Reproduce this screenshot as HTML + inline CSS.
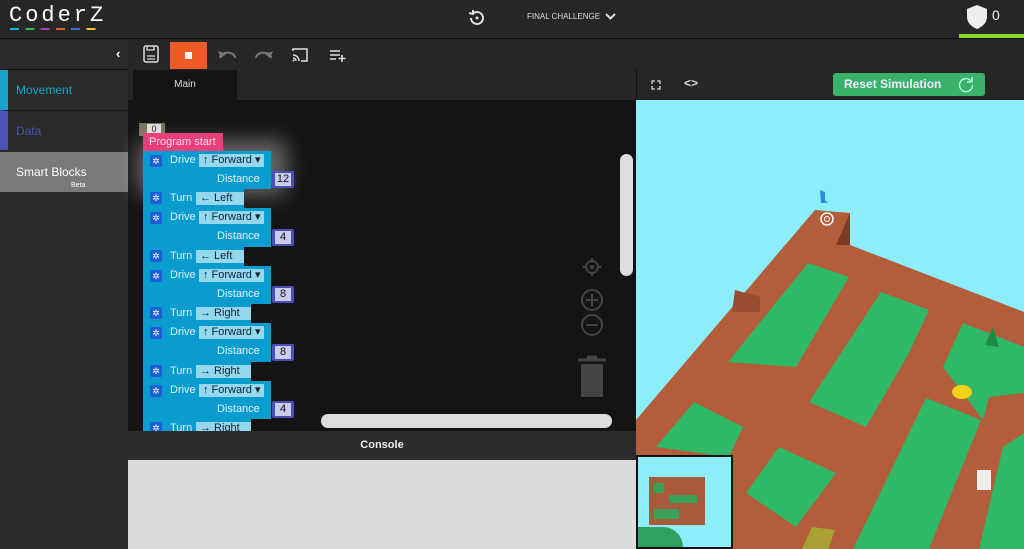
<!DOCTYPE html>
<html><head><meta charset="utf-8"><style>
*{margin:0;padding:0;box-sizing:border-box}
body{width:1024px;height:549px;overflow:hidden;background:#262626;font-family:"Liberation Sans",sans-serif;position:relative}
.abs{position:absolute}
.blk{position:absolute;left:143px;background:#0b9ccf;color:#dff4ff;font-size:11px}
.gear{position:absolute;left:7px;width:12px;height:12px;background:#1c5fd9;border-radius:2px;color:#fff;font-size:9px;line-height:12px;text-align:center}
.dd{position:absolute;background:#93d8ef;color:#123;padding:0 4px;font-size:11px;line-height:13px;height:13px}
.num{position:absolute;left:129px;width:22px;height:17px;background:#4b4fb8;border-radius:2px}
.num span{position:absolute;left:3px;top:2px;width:16px;height:13px;background:#c9ccf0;color:#111;font-size:11px;line-height:13px;text-align:center}
</style></head><body>
<!-- top bar -->
<div class="abs" style="left:0;top:0;width:1024px;height:39px;background:#262626;border-bottom:1px solid #111"></div>
<div class="abs" style="left:9px;top:3px;color:#fff;font-size:22px;letter-spacing:3px;font-family:'Liberation Mono',monospace">CoderZ</div>
<div class="abs" style="left:10px;top:28px;width:90px;height:2px;background:linear-gradient(90deg,#17b3d8 0 10%,transparent 10% 17%,#3fb54a 17% 27%,transparent 27% 34%,#9b46b0 34% 44%,transparent 44% 51%,#e85d2a 51% 61%,transparent 61% 68%,#3e6fd1 68% 78%,transparent 78% 85%,#f2c31b 85% 95%,transparent 95%)"></div>
<svg class="abs" style="left:467px;top:8px" width="20" height="20" viewBox="0 0 20 20"><path d="M4 10a6 6 0 1 0 2-4.5" fill="none" stroke="#ddd" stroke-width="2"/><path d="M2 5l4 1 0-4" fill="none" stroke="#ddd" stroke-width="2"/><circle cx="10" cy="10" r="1.5" fill="#ddd"/></svg>
<div class="abs" style="left:527px;top:12px;color:#ddd;font-size:8px">FINAL CHALLENGE</div>
<svg class="abs" style="left:605px;top:12px" width="11" height="9"><path d="M1 2l4.5 4.5L10 2" fill="none" stroke="#ddd" stroke-width="2"/></svg>
<svg class="abs" style="left:965px;top:4px" width="24" height="26"><path d="M12 1L2 5v8c0 6 5 10 10 12 5-2 10-6 10-12V5z" fill="#eee"/></svg>
<div class="abs" style="left:992px;top:7px;color:#eee;font-size:14px">0</div>
<div class="abs" style="left:959px;top:34px;width:65px;height:4px;background:#8ad82a"></div>
<!-- sidebar -->
<div class="abs" style="left:0;top:40px;width:128px;height:509px;background:#2a2a2a"></div>
<div class="abs" style="left:116px;top:46px;color:#fff;font-size:13px;font-weight:bold">&lsaquo;</div>
<div class="abs" style="left:0;top:69px;width:128px;height:1px;background:#111"></div>
<div class="abs" style="left:0;top:70px;width:128px;height:40px;background:#2a2a2a;border-left:8px solid #1aa3c9"></div>
<div class="abs" style="left:16px;top:83px;color:#1aa3c9;font-size:12px">Movement</div>
<div class="abs" style="left:0;top:110px;width:128px;height:40px;background:#2a2a2a;border-left:8px solid #4a54b8;border-top:1px solid #1a1a1a"></div>
<div class="abs" style="left:16px;top:124px;color:#4a54b8;font-size:12px">Data</div>
<div class="abs" style="left:0;top:152px;width:128px;height:40px;background:#7a7a7a"></div>
<div class="abs" style="left:16px;top:165px;color:#fff;font-size:12px">Smart Blocks</div>
<div class="abs" style="left:71px;top:182px;color:#fff;font-size:7px">Beta</div>
<!-- toolbar -->
<div class="abs" style="left:128px;top:40px;width:508px;height:60px;background:#262626"></div>
<svg class="abs" style="left:143px;top:45px" width="16" height="18"><rect x="1" y="1" width="14" height="16" rx="2" fill="none" stroke="#ddd" stroke-width="1.5"/><path d="M4 1v4h7V1M4 11h8M4 14h8" stroke="#ddd" stroke-width="1.3" fill="none"/></svg>
<div class="abs" style="left:170px;top:42px;width:37px;height:27px;background:#f05a24"></div>
<div class="abs" style="left:185px;top:52px;width:7px;height:7px;background:#fff"></div>
<svg class="abs" style="left:217px;top:48px" width="20" height="12"><path d="M3 10a7 5 0 0 1 15 0" fill="none" stroke="#777" stroke-width="2"/><path d="M1 3l3 7 5-4z" fill="#777"/></svg>
<svg class="abs" style="left:254px;top:48px" width="20" height="12"><path d="M2 10a7 5 0 0 1 15 0" fill="none" stroke="#777" stroke-width="2"/><path d="M19 3l-3 7-5-4z" fill="#777"/></svg>
<svg class="abs" style="left:291px;top:47px" width="18" height="16"><path d="M2 4V2h14v12h-6M2 8a6 6 0 0 1 6 6M2 11a3 3 0 0 1 3 3" fill="none" stroke="#ddd" stroke-width="1.5"/><circle cx="2.5" cy="13.5" r="1" fill="#ddd"/></svg>
<svg class="abs" style="left:329px;top:49px" width="17" height="13"><path d="M1 2h10M1 6h10M1 10h6M13 6v7M9.5 9.5h7" stroke="#ddd" stroke-width="1.6"/></svg>
<!-- workspace -->
<div class="abs" style="left:128px;top:100px;width:508px;height:331px;background:#141414"></div>
<div class="abs" style="left:133px;top:70px;width:104px;height:30px;background:#141414;color:#ddd;font-size:10px;text-align:center;line-height:30px">Main</div>
<div class="abs" style="left:139px;top:123px;width:26px;height:13px;background:#77735a"></div>
<div class="abs" style="left:147px;top:124px;width:14px;height:11px;background:#ddd;color:#222;font-size:9px;text-align:center;line-height:11px">0</div>
<div class="abs" style="left:137px;top:140px;width:150px;height:55px;background:#fff;opacity:.35;filter:blur(10px);border-radius:10px"></div>
<div class="abs" style="left:143px;top:133px;width:80px;height:18px;background:#e8407a;color:#fde;font-size:11px;line-height:18px;padding-left:6px">Program start</div>
<!-- blocks -->
<div class="blk" style="top:151px;width:128px;height:38px"><div class="gear" style="top:4px">✲</div><span class="abs" style="left:27px;top:3px">Drive</span><div class="dd" style="left:56px;top:3px">↑ Forward ▾</div><span class="abs" style="left:74px;top:22px">Distance</span></div>
<div class="num" style="top:171px;left:272px"><span>12</span></div>
<div class="blk" style="top:189px;width:101px;height:19px"><div class="gear" style="top:3px">✲</div><span class="abs" style="left:27px;top:3px">Turn</span><div class="dd" style="left:53px;top:3px">← Left ▾</div></div>
<div class="blk" style="top:208px;width:128px;height:39px"><div class="gear" style="top:4px">✲</div><span class="abs" style="left:27px;top:3px">Drive</span><div class="dd" style="left:56px;top:3px">↑ Forward ▾</div><span class="abs" style="left:74px;top:22px">Distance</span></div>
<div class="num" style="top:229px;left:272px"><span>4</span></div>
<div class="blk" style="top:247px;width:101px;height:19px"><div class="gear" style="top:3px">✲</div><span class="abs" style="left:27px;top:3px">Turn</span><div class="dd" style="left:53px;top:3px">← Left ▾</div></div>
<div class="blk" style="top:266px;width:128px;height:38px"><div class="gear" style="top:4px">✲</div><span class="abs" style="left:27px;top:3px">Drive</span><div class="dd" style="left:56px;top:3px">↑ Forward ▾</div><span class="abs" style="left:74px;top:22px">Distance</span></div>
<div class="num" style="top:286px;left:272px"><span>8</span></div>
<div class="blk" style="top:304px;width:108px;height:19px"><div class="gear" style="top:3px">✲</div><span class="abs" style="left:27px;top:3px">Turn</span><div class="dd" style="left:53px;top:3px">→ Right ▾</div></div>
<div class="blk" style="top:323px;width:128px;height:39px"><div class="gear" style="top:4px">✲</div><span class="abs" style="left:27px;top:3px">Drive</span><div class="dd" style="left:56px;top:3px">↑ Forward ▾</div><span class="abs" style="left:74px;top:22px">Distance</span></div>
<div class="num" style="top:344px;left:272px"><span>8</span></div>
<div class="blk" style="top:362px;width:108px;height:19px"><div class="gear" style="top:3px">✲</div><span class="abs" style="left:27px;top:3px">Turn</span><div class="dd" style="left:53px;top:3px">→ Right ▾</div></div>
<div class="blk" style="top:381px;width:128px;height:38px"><div class="gear" style="top:4px">✲</div><span class="abs" style="left:27px;top:3px">Drive</span><div class="dd" style="left:56px;top:3px">↑ Forward ▾</div><span class="abs" style="left:74px;top:22px">Distance</span></div>
<div class="num" style="top:401px;left:272px"><span>4</span></div>
<div class="blk" style="top:419px;width:108px;height:12px;overflow:hidden"><div class="gear" style="top:3px">✲</div><span class="abs" style="left:27px;top:3px">Turn</span><div class="dd" style="left:53px;top:3px">→ Right ▾</div></div>
<!-- scrollbars/tools -->
<div class="abs" style="left:620px;top:154px;width:13px;height:122px;background:#ddd;border-radius:7px"></div>
<div class="abs" style="left:321px;top:414px;width:291px;height:14px;background:#ddd;border-radius:7px"></div>
<svg class="abs" style="left:578px;top:256px" width="28" height="145"><circle cx="14" cy="11" r="6" fill="none" stroke="#444" stroke-width="2"/><circle cx="14" cy="11" r="2" fill="#444"/><path d="M14 2v4M14 16v4M5 11h4M19 11h4" stroke="#444" stroke-width="2"/><circle cx="14" cy="44" r="10" fill="none" stroke="#444" stroke-width="2"/><path d="M8 44h12M14 38v12" stroke="#444" stroke-width="2"/><circle cx="14" cy="69" r="10" fill="none" stroke="#444" stroke-width="2"/><path d="M8 69h12" stroke="#444" stroke-width="2"/><path d="M-1 104h30M9 101h10" stroke="#444" stroke-width="3"/><path d="M3 108h22v33H3z" fill="#444"/></svg>
<!-- console -->
<div class="abs" style="left:128px;top:431px;width:508px;height:29px;background:#2b2b2b;color:#eee;font-size:11px;font-weight:bold;text-align:center;line-height:29px">Console</div>
<div class="abs" style="left:128px;top:460px;width:508px;height:89px;background:#dcdcdc"></div>
<!-- right panel -->
<div class="abs" style="left:636px;top:70px;width:1px;height:30px;background:#111"></div>
<div class="abs" style="left:637px;top:70px;width:387px;height:30px;background:#262626"></div>
<svg class="abs" style="left:651px;top:80px" width="10" height="10"><path d="M1 4V1h3M6 1h3v3M9 6v3H6M4 9H1V6" fill="none" stroke="#ddd" stroke-width="1.3"/></svg>
<div class="abs" style="left:684px;top:76px;color:#ddd;font-size:12px;font-weight:bold">&lt;&gt;</div>
<div class="abs" style="left:833px;top:73px;width:152px;height:23px;background:#3ab26a;border-radius:3px;color:#eef;font-size:12px;font-weight:bold;line-height:23px;padding-left:11px">Reset Simulation</div>
<svg class="abs" style="left:957px;top:76px" width="18" height="17"><path d="M14 5a6.5 6.5 0 1 0 1.5 4" fill="none" stroke="#bfe" stroke-width="1.3"/><path d="M15 1v5h-5" fill="none" stroke="#bfe" stroke-width="1.3"/></svg>
<svg class="abs" style="left:636px;top:100px" width="388" height="449" viewBox="636 100 388 449">
<rect x="636" y="100" width="388" height="449" fill="#8ceefa"/>
<polygon points="636,420 815,210 850,213 850,245 1024,312 1024,549 636,549" fill="#b35d3b"/>
<polygon points="850,213 850,245 836,245" fill="#7a3a22"/>
<polygon points="735,290 760,297 760,312 732,312" fill="#9a4c2e"/>
<polygon points="808,263 849,277 796,367 728,362" fill="#2fb865"/>
<polygon points="881,292 929,310 909,353 866,427 809,402" fill="#2fb865"/>
<polygon points="963,323 1024,347 1024,393 989,397 983,420 943,367" fill="#2fb865"/>
<polygon points="694,402 743,427 729,457 656,447" fill="#2fb865"/>
<polygon points="779,447 836,473 796,527 746,493" fill="#2fb865"/>
<polygon points="926,398 981,420 929,549 853,549" fill="#2fb865"/>
<polygon points="1003,447 1024,433 1024,549 979,549" fill="#2fb865"/>
<polygon points="802,549 812,527 835,530 828,549" fill="#a9a233"/>
<ellipse cx="962" cy="392" rx="10" ry="7" fill="#f4d21a"/>
<circle cx="827" cy="219" r="6" fill="none" stroke="#fff" stroke-width="1.5"/><circle cx="827" cy="219" r="2.5" fill="none" stroke="#fff"/>
<path d="M820 190l5 2v8l3 3h-7z" fill="#2a8de0"/>
<path d="M985 345l8-18 6 20z" fill="#1e8a4a"/>
<rect x="977" y="470" width="14" height="20" fill="#eee"/>
</svg>
<!-- minimap -->
<div class="abs" style="left:636px;top:455px;width:97px;height:94px;background:#8ceefa;border:2px solid #111;overflow:hidden">
<div class="abs" style="left:11px;top:20px;width:56px;height:48px;background:#a95a3a"></div>
<div class="abs" style="left:16px;top:26px;width:10px;height:10px;background:#3aa05a"></div>
<div class="abs" style="left:31px;top:38px;width:28px;height:8px;background:#3aa05a"></div>
<div class="abs" style="left:16px;top:52px;width:25px;height:10px;background:#3aa05a"></div>
<div class="abs" style="left:0;top:70px;width:45px;height:24px;background:#2fa060;border-radius:0 20px 0 0"></div>
</div>
</body></html>
